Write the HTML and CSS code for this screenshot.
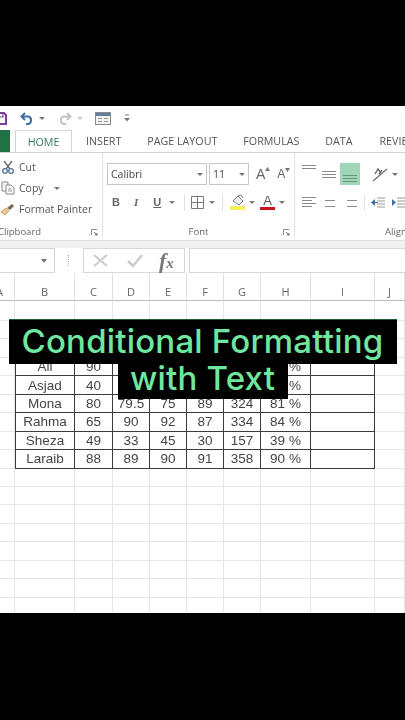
FILE: index.html
```html
<!DOCTYPE html>
<html lang="en">
<head>
<meta charset="utf-8">
<title>Conditional Formatting with Text</title>
<link rel="stylesheet" href="styles.css">
</head>
<body>
<div class="stage">
  <div class="bar-top"></div>
  <main class="app">
    <div class="window">
      <div class="qat">
        <svg class="i-save" width="7" height="13" viewBox="0 0 7 13"><path d="M-4 1h8l2 2v9H-4z" fill="none" stroke="#7a3f98" stroke-width="2"/><path d="M-1 1v4h4V1" fill="none" stroke="#7a3f98" stroke-width="1.2"/></svg>
        <svg class="i-undo" width="14" height="13" viewBox="0 0 14 13"><path d="M5 1 1.500 4.500 5 8M2 4.500h6.500a4 4 0 0 1 0 7.500H6" fill="none" stroke="#3e6ea8" stroke-width="2"/></svg>
        <span class="dd dd-undo"></span>
        <svg class="i-redo" width="14" height="13" viewBox="0 0 14 13"><path d="M9 1l3.500 3.500L9 8M12 4.500H5.500a4 4 0 0 0 0 7.500H8" fill="none" stroke="#c4c4c4" stroke-width="2"/></svg>
        <span class="dd dd-redo"></span>
        <svg class="i-form" width="16" height="13" viewBox="0 0 16 13"><rect x=".5" y=".5" width="15" height="12" fill="#f2f2f2" stroke="#8a8a8a"/><rect x="1" y="1" width="14" height="3" fill="#5f7f9c"/><path d="M3 6.500h4M9 6.500h4M3 9.500h4M9 9.500h4" stroke="#999"/></svg>
        <svg class="i-custom" width="6" height="8" viewBox="0 0 6 8"><path d="M1 1h4" stroke="#777"/><path d="M0 4h6L3 7.500z" fill="#777"/></svg>
      </div>
      <nav class="tabs">
        <span class="file"></span>
        <span class="tab tab-home">HOME</span>
        <span class="tab tab-insert">INSERT</span>
        <span class="tab tab-layout">PAGE LAYOUT</span>
        <span class="tab tab-formulas">FORMULAS</span>
        <span class="tab tab-data">DATA</span>
        <span class="tab tab-review">REVIEW</span>
      </nav>
      <section class="ribbon">
        <div class="group clipboard">
          <div class="clip-rows">
            <div class="clip-row"><svg width="14" height="14" viewBox="0 0 14 14"><path d="M3 1l6 8M11 1 5 9" stroke="#667" stroke-width="1.300" fill="none"/><circle cx="4" cy="11" r="2.300" fill="none" stroke="#4f7396" stroke-width="1.300"/><circle cx="10" cy="11" r="2.300" fill="none" stroke="#4f7396" stroke-width="1.300"/></svg><span>Cut</span></div>
            <div class="clip-row"><svg width="14" height="14" viewBox="0 0 14 14"><path d="M1 1h6v9H1z" fill="#f4f4f4" stroke="#8a8a8a"/><path d="M5 4h5l3 3v6H5z" fill="#fff" stroke="#7d8a99"/><path d="M7 8h4M7 10h4" stroke="#999"/></svg><span>Copy</span><span class="dd dd-copy"></span></div>
            <div class="clip-row"><svg width="14" height="14" viewBox="0 0 14 14"><path d="M0 10l5-4 3 3-4 4z" fill="#e8c98a" stroke="#b08a4a" stroke-width=".7"/><path d="M6 6l5-4 2 2-4 4z" fill="#76695a"/></svg><span>Format Painter</span></div>
          </div>
          <div class="group-label"><span>Clipboard</span><svg class="launch" width="7" height="7" viewBox="0 0 7 7"><path d="M.5 6V.5H6" fill="none" stroke="#888"/><path d="M3 3l3 3M6 4v2H4" fill="none" stroke="#666"/></svg></div>
        </div>
        <div class="group font">
          <div class="font-top">
            <div class="select select-font"><span>Calibri</span><span class="dd"></span></div>
            <div class="select select-size"><span>11</span><span class="dd"></span></div>
            <span class="grow-a">A<svg width="5" height="4" viewBox="0 0 5 4"><path d="M0 4l2.500-4L5 4z" fill="#777"/></svg></span>
            <span class="shrink-a">A<svg width="5" height="4" viewBox="0 0 5 4"><path d="M0 0l2.500 4L5 0z" fill="#777"/></svg></span>
          </div>
          <div class="font-bottom">
            <b class="fb">B</b><i class="fi">I</i><u class="fu">U</u><span class="dd dd-u"></span><span class="vsep sep-a"></span>
            <svg class="i-border" width="13" height="13" viewBox="0 0 13 13"><path d="M.5.500h12v12H.5zM6.500.500v12M.5 6.500h12" fill="none" stroke="#777"/></svg><span class="dd dd-b"></span><span class="vsep sep-b"></span>
            <svg class="i-fill" width="16" height="16" viewBox="0 0 16 16"><path d="M3 7l5-5 5 5-4 4z" fill="#f0f0f0" stroke="#6f7f90"/><path d="M8 2l3-1 2 3" fill="none" stroke="#6f7f90"/><rect y="12" width="15" height="4" fill="#f6f05a"/></svg><span class="dd dd-f"></span>
            <span class="color-a">A</span><span class="dd dd-c"></span>
          </div>
          <div class="group-label"><span>Font</span><svg class="launch" width="7" height="7" viewBox="0 0 7 7"><path d="M.5 6V.5H6" fill="none" stroke="#888"/><path d="M3 3l3 3M6 4v2H4" fill="none" stroke="#666"/></svg></div>
        </div>
        <div class="group align">
          <div class="align-top">
            <span class="lines l-top"><i></i><i></i></span>
            <span class="lines l-mid"><i></i><i></i><i></i></span>
            <span class="active"><span class="lines l-bot"><i></i><i></i><i></i></span></span>
            <svg class="i-orient" width="17" height="15" viewBox="0 0 17 15"><path d="M1 14 15 2" stroke="#777" stroke-width="1.400"/><path d="M3 7l3-5 3 4M10 3l-3 4" fill="none" stroke="#666" stroke-width="1.400"/></svg>
            <span class="dd"></span>
          </div>
          <div class="align-bottom">
            <span class="lines l-left"><i></i><i></i><i></i><i></i></span>
            <span class="lines l-center"><i></i><i></i><i></i><i></i></span>
            <span class="lines l-right"><i></i><i></i><i></i><i></i></span>
            <span class="vsep sep-c"></span>
            <svg class="i-indent" width="14" height="11" viewBox="0 0 14 11"><path d="M6 1h8M6 4h8M6 7h8M6 10h8" stroke="#999"/><path d="M0 5.500 4 2v7z" fill="#3e6ea8"/><path d="M2 5.500h5" stroke="#3e6ea8"/></svg>
            <svg class="i-indent" width="14" height="11" viewBox="0 0 14 11"><path d="M6 1h8M6 4h8M6 7h8M6 10h8" stroke="#999"/><path d="M5 5.500 1 2v7z" fill="#3e6ea8"/></svg>
          </div>
          <div class="group-label"><span class="align-name">Alignment</span></div>
        </div>
      </section>
      <div class="strip"></div>
      <div class="formula">
        <div class="namebox"><span class="dd"></span></div>
        <span class="dots"></span>
        <div class="fx-box">
          <svg width="17" height="15" viewBox="0 0 17 15"><path d="M2 2l13 11M15 2 2 13" stroke="#ccc" stroke-width="2.200"/></svg>
          <svg width="17" height="15" viewBox="0 0 17 15"><path d="M2 8l5 5 9-11" fill="none" stroke="#ccc" stroke-width="2.500"/></svg>
          <span class="fx">f<small>x</small></span>
        </div>
        <div class="input"></div>
      </div>
      <div class="sheet">
        <div class="ch">A</div><div class="ch">B</div><div class="ch">C</div><div class="ch">D</div><div class="ch">E</div><div class="ch">F</div><div class="ch">G</div><div class="ch">H</div><div class="ch">I</div><div class="ch">J</div>

        <div class="c"></div><div class="c"></div><div class="c"></div><div class="c"></div><div class="c"></div><div class="c"></div><div class="c"></div><div class="c"></div><div class="c"></div><div class="c"></div>

        <div class="c"></div><div class="t s"></div><div class="t"></div><div class="t"></div><div class="t"></div><div class="t"></div><div class="t"></div><div class="t"></div><div class="t"></div><div class="c"></div>
        <div class="c"></div><div class="t s"></div><div class="t"></div><div class="t"></div><div class="t"></div><div class="t"></div><div class="t"></div><div class="t"></div><div class="t"></div><div class="c"></div>
        <div class="c"></div><div class="t s">All</div><div class="t">90</div><div class="t"></div><div class="t"></div><div class="t"></div><div class="t"></div><div class="t">90 %</div><div class="t"></div><div class="c"></div>
        <div class="c"></div><div class="t s">Asjad</div><div class="t">40</div><div class="t"></div><div class="t"></div><div class="t"></div><div class="t"></div><div class="t">40 %</div><div class="t"></div><div class="c"></div>
        <div class="c"></div><div class="t s">Mona</div><div class="t">80</div><div class="t">79.5</div><div class="t">75</div><div class="t">89</div><div class="t">324</div><div class="t">81 %</div><div class="t"></div><div class="c"></div>
        <div class="c"></div><div class="t s">Rahma</div><div class="t">65</div><div class="t">90</div><div class="t">92</div><div class="t">87</div><div class="t">334</div><div class="t">84 %</div><div class="t"></div><div class="c"></div>
        <div class="c"></div><div class="t s">Sheza</div><div class="t">49</div><div class="t">33</div><div class="t">45</div><div class="t">30</div><div class="t">157</div><div class="t">39 %</div><div class="t"></div><div class="c"></div>
        <div class="c"></div><div class="t s">Laraib</div><div class="t">88</div><div class="t">89</div><div class="t">90</div><div class="t">91</div><div class="t">358</div><div class="t">90 %</div><div class="t"></div><div class="c"></div>

        <div class="c"></div><div class="c"></div><div class="c"></div><div class="c"></div><div class="c"></div><div class="c"></div><div class="c"></div><div class="c"></div><div class="c"></div><div class="c"></div>
        <div class="c"></div><div class="c"></div><div class="c"></div><div class="c"></div><div class="c"></div><div class="c"></div><div class="c"></div><div class="c"></div><div class="c"></div><div class="c"></div>
        <div class="c"></div><div class="c"></div><div class="c"></div><div class="c"></div><div class="c"></div><div class="c"></div><div class="c"></div><div class="c"></div><div class="c"></div><div class="c"></div>
        <div class="c"></div><div class="c"></div><div class="c"></div><div class="c"></div><div class="c"></div><div class="c"></div><div class="c"></div><div class="c"></div><div class="c"></div><div class="c"></div>
        <div class="c"></div><div class="c"></div><div class="c"></div><div class="c"></div><div class="c"></div><div class="c"></div><div class="c"></div><div class="c"></div><div class="c"></div><div class="c"></div>
        <div class="c"></div><div class="c"></div><div class="c"></div><div class="c"></div><div class="c"></div><div class="c"></div><div class="c"></div><div class="c"></div><div class="c"></div><div class="c"></div>
        <div class="c"></div><div class="c"></div><div class="c"></div><div class="c"></div><div class="c"></div><div class="c"></div><div class="c"></div><div class="c"></div><div class="c"></div><div class="c"></div>
        <div class="c"></div><div class="c"></div><div class="c"></div><div class="c"></div><div class="c"></div><div class="c"></div><div class="c"></div><div class="c"></div><div class="c"></div><div class="c"></div>
      </div>
    </div>
    <h1 class="caption"><span class="cap-1">Conditional Formatting</span><span class="cap-2">with Text</span></h1>
  </main>
  <div class="bar-bottom"></div>
</div>
</body>
</html>
```
FILE: styles.css
```css
* { box-sizing: border-box; }
html, body { margin: 0; padding: 0; background: #000; }
.stage { width: 405px; height: 720px; display: flex; flex-direction: column; overflow: hidden; font-family: "Open Sans", "Liberation Sans", sans-serif; }
.bar-top { height: 106px; background: #000; flex: none; }
.bar-bottom { height: 107px; background: #000; flex: none; }
.app { height: 507px; position: relative; background: #fff; overflow: hidden; flex: none; }
.window { filter: blur(0.45px); height: 507px; overflow: hidden; }

.dd { display: inline-block; width: 0; height: 0; border-left: 3px solid transparent; border-right: 3px solid transparent; border-top: 3px solid #777; flex: none; }

/* quick access */
.qat { height: 24px; display: flex; align-items: center; }
.qat svg { flex: none; display: block; }
.i-undo { margin-left: 13px; }
.dd-undo { margin-left: 5px; }
.i-redo { margin-left: 13px; }
.dd-redo { margin-left: 5px; border-top-color: #ccc; }
.i-form { margin-left: 12px; }
.i-custom { margin-left: 13px; }

/* tabs */
.tabs { height: 23px; display: flex; align-items: stretch; font-size: 10.7px; color: #555; border-bottom: 1px solid #d4d4d4; white-space: nowrap; overflow: hidden; }
.file { width: 10px; background: #217346; flex: none; }
.tab { display: flex; align-items: center; flex: none; }
.tab-home { margin-left: 5px; width: 57px; justify-content: center; color: #2f7d58; background: #fff; border: 1px solid #d4d4d4; border-bottom: 0; box-shadow: 0 1px 0 #fff; }
.tab-insert { margin-left: 14px; }
.tab-layout { margin-left: 26px; }
.tab-formulas { margin-left: 26px; }
.tab-data { margin-left: 26px; }
.tab-review { margin-left: 27px; }

/* ribbon */
.ribbon { height: 87px; display: flex; font-size: 10.5px; color: #555; }
.group { position: relative; flex: none; padding-top: 10px; border-right: 1px solid #e2e2e2; height: 84px; }
.clipboard { width: 103px; }
.font { width: 192px; padding-left: 4px; }
.align { width: 110px; border-right: 0; }
.group-label { position: absolute; left: 0; right: 0; bottom: -1px; height: 14px; display: flex; justify-content: center; align-items: center; font-size: 9.5px; color: #666; white-space: nowrap; }
.clipboard .group-label { justify-content: flex-start; margin-left: -2px; }
.launch { position: absolute; right: 4px; bottom: 2px; }
.clip-rows { display: flex; flex-direction: column; gap: 7px; margin-top: -3px; }
.clip-row { height: 14px; display: flex; align-items: center; gap: 4px; white-space: nowrap; padding-left: 1px; font-size: 10.5px; }
.clip-row svg { flex: none; }
.dd-copy { margin-left: 6px; }
.select { height: 22px; border: 1px solid #c6c6c6; display: flex; align-items: center; justify-content: space-between; padding: 0 3px; font-size: 10.5px; color: #444; flex: none; background: #fff; }
.font-top { display: flex; align-items: center; }
.select-font { width: 100px; }
.select-size { width: 40px; margin-left: 2px; }
.grow-a, .shrink-a { display: flex; align-items: flex-start; font-family: "Liberation Sans", sans-serif; color: #666; flex: none; line-height: 1; }
.grow-a { font-size: 14px; margin-left: 7px; }
.shrink-a { font-size: 12px; margin-left: 7px; }
.font-bottom { display: flex; align-items: center; height: 20px; margin-top: 7px; font-family: "Liberation Sans", sans-serif; font-size: 11px; color: #666; }
.font-bottom > * { flex: none; }
.fb { margin-left: 5px; }
.fi { margin-left: 14px; font-family: "Liberation Serif", serif; font-weight: 700; }
.fu { margin-left: 15px; font-weight: 700; }
.dd-u { margin-left: 8px; }
.vsep { width: 1px; height: 17px; background: #e2e2e2; }
.sep-a { margin-left: 9px; }
.i-border { margin-left: 6px; }
.dd-b { margin-left: 5px; }
.sep-b { margin-left: 7px; }
.i-fill { margin-left: 7px; }
.dd-f { margin-left: 3px; }
.color-a { margin-left: 5px; width: 15px; text-align: center; font-size: 13px; line-height: 13px; color: #555; border-bottom: 3px solid #c8141c; }
.dd-c { margin-left: 4px; }

.align-top { display: flex; align-items: center; height: 22px; padding-left: 7px; }
.align-bottom { display: flex; align-items: center; height: 20px; margin-top: 7px; padding-left: 7px; }
.lines { display: flex; flex-direction: column; gap: 2px; width: 14px; flex: none; }
.lines i { display: block; height: 1px; background: #8a8a8a; }
.l-top { align-self: flex-start; margin-top: 2px; }
.l-mid { margin-left: 6px; }
.active { width: 20px; height: 22px; margin-left: 4px; background: #a0d6b8; display: flex; align-items: flex-end; justify-content: center; padding-bottom: 3px; flex: none; }
.active .lines i { background: #6b8f7d; }
.i-orient { margin-left: 12px; flex: none; }
.align .dd { margin-left: 3px; }
.l-center { margin-left: 7px; align-items: center; }
.l-right { margin-left: 6px; align-items: flex-end; }
.l-left i:nth-child(even) { width: 70%; }
.l-center i:nth-child(even) { width: 70%; }
.l-right i:nth-child(even) { width: 70%; }
.sep-c { margin-left: 7px; flex: none; }
.i-indent { margin-left: 6px; flex: none; }
.align-name { position: absolute; left: 90px; }

.strip { height: 8px; background: #f1f1f1; border-top: 1px solid #dedede; }

/* formula bar */
.formula { height: 25px; display: flex; align-items: stretch; }
.namebox { width: 55px; border: 1px solid #d8d8d8; border-left: 0; display: flex; align-items: center; justify-content: flex-end; padding-right: 7px; flex: none; }
.namebox .dd { border-left-width: 3.500px; border-right-width: 3.500px; border-top-width: 4px; }
.dots { width: 1px; height: 11px; margin: 7px 13px 0; border-left: 1px dotted #aaa; flex: none; }
.fx-box { width: 102px; margin-left: 1px; border: 1px solid #d8d8d8; display: flex; align-items: center; gap: 17px; padding-left: 8px; flex: none; }
.fx { font-family: "Liberation Serif", serif; font-style: italic; font-size: 22px; color: #777; font-weight: 700; line-height: 1; margin-left: -1px; }
.fx small { font-size: 15px; }
.input { flex: 1; margin-left: 4px; border: 1px solid #d8d8d8; border-right: 0; }

/* sheet */
.sheet { display: grid; grid-template-columns: 15px 60px 38px 37px 37px 37px 37px 50px 64px 30px; grid-auto-rows: 18.45px; grid-template-rows: 28px 20px; font-family: "Liberation Sans", sans-serif; }
.ch { display: flex; align-items: flex-end; justify-content: center; padding-bottom: 1px; font-size: 11px; color: #666; border-bottom: 1px solid #bdbdbd; border-right: 1px solid #e0e0e0; font-family: "Open Sans", sans-serif; }
.ch:last-child { border-right: 0; }
.ch:first-child { justify-content: flex-start; margin-left: -4px; }
.c { border-right: 1px solid #e6e6e6; border-bottom: 1px solid #e6e6e6; }
.t { display: flex; align-items: center; justify-content: center; font-size: 13.5px; color: #444; border-right: 1px solid #3c3c3c; border-bottom: 1px solid #3c3c3c; white-space: nowrap; }
.s { border-left: 1px solid #3c3c3c; }

/* caption */
.caption { position: absolute; left: 0; right: 0; top: 213px; margin: 0; display: flex; flex-direction: column; align-items: center; font-family: Inter, "Open Sans", sans-serif; font-weight: 500; font-size: 33px; color: #6fe7a0; line-height: 1; letter-spacing: 0.2px; }
.cap-1 { background: #000; height: 45px; width: 388px; padding-bottom: 2px; display: flex; align-items: center; justify-content: center; border-top: 1px solid #1e5a36; white-space: nowrap; }
.cap-2 { background: #000; height: 35px; width: 170px; padding-bottom: 7px; display: flex; align-items: center; justify-content: center; white-space: nowrap; }
```
